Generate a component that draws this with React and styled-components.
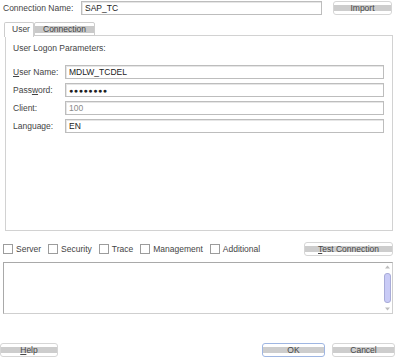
import styled, { createGlobalStyle } from "styled-components";

const Global = createGlobalStyle`
  html, body {
    margin: 0;
    padding: 0;
    background: #fff;
  }
`;

const Dialog = styled.div`
  width: 400px;
  height: 359px;
  background: #fff;
  display: flex;
  flex-direction: column;
  font-family: "Liberation Sans", Arial, sans-serif;
  font-size: 8.5px;
  color: #404040;
  overflow: hidden;
`;

const TopRow = styled.div`
  display: flex;
  align-items: center;
  margin-top: 1px;
  padding-left: 3px;
  height: 14px;
`;

const Label = styled.label`
  flex: 0 0 ${(p) => p.$width}px;
  white-space: nowrap;
  color: #444;
  u {
    text-decoration: underline;
  }
`;

const Field = styled.input`
  box-sizing: border-box;
  width: ${(p) => p.$width}px;
  height: 14px;
  margin: 0;
  padding: 0 3px;
  border: 1px solid #bdbdbd;
  box-shadow: inset 1px 1px 0 #e6e6e6;
  background: #fff;
  font-family: "Liberation Sans", Arial, sans-serif;
  font-size: ${(p) => (p.$dots ? "7px" : "8.5px")};
  letter-spacing: ${(p) => (p.$dots ? "0.6px" : "0")};
  color: ${(p) => (p.$muted ? "#8a8a8a" : "#222")};
  outline: none;
`;

const Button = styled.button`
  box-sizing: border-box;
  width: ${(p) => p.$width}px;
  height: 14px;
  margin: 0 0 0 ${(p) => p.$offset || 0}px;
  padding: 0;
  border: 1px solid ${(p) => (p.$focus ? "#9fb6e2" : "#d6d6d6")};
  border-radius: 3px;
  background: linear-gradient(
    to bottom,
    #fff 0,
    #fff 3px,
    #cdcdcd 3px,
    #cdcdcd 9px,
    #fff 9px
  );
  font-family: "Liberation Sans", Arial, sans-serif;
  font-size: 8.5px;
  line-height: 12px;
  color: #484848;
  text-align: center;
  u {
    text-decoration: underline;
  }
`;

const TabBar = styled.div`
  display: flex;
  margin-top: 7px;
  padding-left: 4px;
  height: 14px;
  position: relative;
  z-index: 1;
`;

const Tab = styled.div`
  box-sizing: border-box;
  width: ${(p) => p.$width}px;
  height: ${(p) => (p.$active ? 15 : 14)}px;
  padding-left: ${(p) => (p.$active ? 7 : 8)}px;
  line-height: 12px;
  color: #444;
  border: 1px solid #cdcdcd;
  border-bottom: ${(p) => (p.$active ? "none" : "1px solid #cdcdcd")};
  border-radius: 2px 2px 0 0;
  background: ${(p) =>
    p.$active
      ? "#fff"
      : "linear-gradient(to bottom, #fff 0, #fff 3px, #c9c9c9 3px, #c9c9c9 10px, #fff 10px)"};
`;

const Panel = styled.div`
  box-sizing: border-box;
  margin: -1px 0 0 5px;
  width: 388px;
  height: 196px;
  border: 1px solid #d2d2d2;
  padding: 7px 0 0 7px;
`;

const Caption = styled.div`
  line-height: 10px;
  color: #444;
`;

const Form = styled.div`
  display: flex;
  flex-direction: column;
  gap: 4px;
  margin-top: 12px;
`;

const FormRow = styled.div`
  display: flex;
  align-items: center;
`;

const OptionsRow = styled.div`
  display: flex;
  align-items: center;
  justify-content: space-between;
  margin-top: 11px;
  padding: 0 7px 0 3px;
  height: 14px;
`;

const Checks = styled.div`
  display: flex;
  align-items: center;
  gap: 7px;
`;

const Check = styled.label`
  display: flex;
  align-items: center;
  gap: 3px;
  color: #444;
`;

const Box = styled.span`
  box-sizing: border-box;
  width: 10px;
  height: 10px;
  border: 1px solid #9c9c9c;
  background: #fff;
`;

const Output = styled.div`
  box-sizing: border-box;
  display: flex;
  margin: 6px 0 0 3px;
  width: 390px;
  height: 52px;
  border: 1px solid #a9a9a9;
  border-right-color: #cfcfcf;
  border-bottom-color: #cfcfcf;
`;

const OutputText = styled.div`
  flex: 1;
`;

const ScrollBar = styled.div`
  width: 9px;
  display: flex;
  flex-direction: column;
  align-items: center;
  padding: 2px 0;
  box-sizing: border-box;
`;

const Thumb = styled.div`
  box-sizing: border-box;
  width: 7px;
  flex: 1;
  margin: 4px 0;
  border: 1px solid #a9acd8;
  border-radius: 3px;
  background: #c9cbf6;
`;

const Footer = styled.div`
  display: flex;
  align-items: center;
  justify-content: space-between;
  margin-top: 29px;
  padding-right: 5px;
`;

const Pair = styled.div`
  display: flex;
  gap: 7px;
`;

const Arrow = ({ down }) => (
  <svg width="7" height="4" viewBox="0 0 7 4">
    <path d={down ? "M1 0.5 L3.5 3.5 L6 0.5" : "M1 3.5 L3.5 0.5 L6 3.5"} fill="#bdbdbd" />
  </svg>
);

const rows = [
  { label: <><u>U</u>ser Name:</>, value: "MDLW_TCDEL" },
  { label: <>Pass<u>w</u>ord:</>, value: "●●●●●●●●", dots: true },
  { label: <>Client:</>, value: "100", muted: true },
  { label: <>Language:</>, value: "EN" },
];

const options = ["Server", "Security", "Trace", "Management", "Additional"];

export default function App() {
  return (
    <>
      <Global />
      <Dialog>
        <TopRow>
          <Label $width={78}>Connection Name:</Label>
          <Field $width={241} readOnly value="SAP_TC" />
          <Button $width={59} $offset={11}>Import</Button>
        </TopRow>

        <TabBar>
          <Tab $active $width={30}>User</Tab>
          <Tab $width={61}>Connection</Tab>
        </TabBar>
        <Panel>
          <Caption>User Logon Parameters:</Caption>
          <Form>
            {rows.map((r, i) => (
              <FormRow key={i}>
                <Label $width={52}>{r.label}</Label>
                <Field
                  $width={319}
                  readOnly
                  value={r.value}
                  $dots={r.dots}
                  $muted={r.muted}
                />
              </FormRow>
            ))}
          </Form>
        </Panel>

        <OptionsRow>
          <Checks>
            {options.map((o) => (
              <Check key={o}>
                <Box />
                {o}
              </Check>
            ))}
          </Checks>
          <Button $width={89}>
            <u>T</u>est Connection
          </Button>
        </OptionsRow>

        <Output>
          <OutputText />
          <ScrollBar>
            <Arrow />
            <Thumb />
            <Arrow down />
          </ScrollBar>
        </Output>

        <Footer>
          <Button $width={58}>
            <u>H</u>elp
          </Button>
          <Pair>
            <Button $width={63} $focus>OK</Button>
            <Button $width={63}>Cancel</Button>
          </Pair>
        </Footer>
      </Dialog>
    </>
  );
}
